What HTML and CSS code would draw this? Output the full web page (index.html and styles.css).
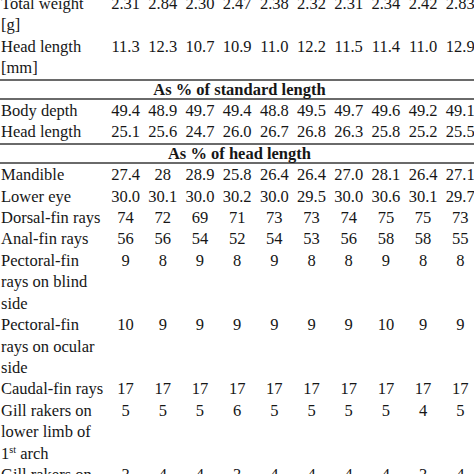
FILE: index.html
```html
<!DOCTYPE html>
<html>
<head>
<meta charset="utf-8">
<link rel="stylesheet" href="styles.css">
</head>
<body>
<table class="data">
<tbody>
<tr><td class="lbl">Total weight<br>[g]</td><td>2.31</td><td>2.84</td><td>2.30</td><td>2.47</td><td>2.38</td><td>2.32</td><td>2.31</td><td>2.34</td><td>2.42</td><td>2.83</td></tr>
<tr><td class="lbl">Head length<br>[mm]</td><td>11.3</td><td>12.3</td><td>10.7</td><td>10.9</td><td>11.0</td><td>12.2</td><td>11.5</td><td>11.4</td><td>11.0</td><td>12.9</td></tr>
<tr class="section"><td colspan="11">As % of standard length</td></tr>
<tr><td class="lbl">Body depth</td><td>49.4</td><td>48.9</td><td>49.7</td><td>49.4</td><td>48.8</td><td>49.5</td><td>49.7</td><td>49.6</td><td>49.2</td><td>49.1</td></tr>
<tr><td class="lbl">Head length</td><td>25.1</td><td>25.6</td><td>24.7</td><td>26.0</td><td>26.7</td><td>26.8</td><td>26.3</td><td>25.8</td><td>25.2</td><td>25.5</td></tr>
<tr class="section"><td colspan="11">As % of head length</td></tr>
<tr><td class="lbl">Mandible</td><td>27.4</td><td>28</td><td>28.9</td><td>25.8</td><td>26.4</td><td>26.4</td><td>27.0</td><td>28.1</td><td>26.4</td><td>27.1</td></tr>
<tr><td class="lbl">Lower eye</td><td>30.0</td><td>30.1</td><td>30.0</td><td>30.2</td><td>30.0</td><td>29.5</td><td>30.0</td><td>30.6</td><td>30.1</td><td>29.7</td></tr>
<tr><td class="lbl">Dorsal-fin rays</td><td>74</td><td>72</td><td>69</td><td>71</td><td>73</td><td>73</td><td>74</td><td>75</td><td>75</td><td>73</td></tr>
<tr><td class="lbl">Anal-fin rays</td><td>56</td><td>56</td><td>54</td><td>52</td><td>54</td><td>53</td><td>56</td><td>58</td><td>58</td><td>55</td></tr>
<tr><td class="lbl">Pectoral-fin<br>rays on blind<br>side</td><td>9</td><td>8</td><td>9</td><td>8</td><td>9</td><td>8</td><td>8</td><td>9</td><td>8</td><td>8</td></tr>
<tr><td class="lbl">Pectoral-fin<br>rays on ocular<br>side</td><td>10</td><td>9</td><td>9</td><td>9</td><td>9</td><td>9</td><td>9</td><td>10</td><td>9</td><td>9</td></tr>
<tr><td class="lbl">Caudal-fin rays</td><td>17</td><td>17</td><td>17</td><td>17</td><td>17</td><td>17</td><td>17</td><td>17</td><td>17</td><td>17</td></tr>
<tr><td class="lbl">Gill rakers on<br>lower limb of<br>1<sup>st</sup> arch</td><td>5</td><td>5</td><td>5</td><td>6</td><td>5</td><td>5</td><td>5</td><td>5</td><td>4</td><td>5</td></tr>
<tr><td class="lbl">Gill rakers on<br>upper limb of<br>1<sup>st</sup> arch</td><td>3</td><td>4</td><td>4</td><td>3</td><td>4</td><td>4</td><td>4</td><td>4</td><td>3</td><td>4</td></tr>
</tbody>
</table>
</body>
</html>
```

FILE: styles.css
```css
html, body {
  margin: 0;
  padding: 0;
  background: #ffffff;
  overflow: hidden;
}
body {
  width: 474px;
  height: 474px;
  font-family: "Liberation Serif", serif;
}
.data {
  border-collapse: collapse;
  table-layout: fixed;
  width: 478px;
  margin-top: -7px;
  font-family: "Liberation Serif", "Tinos", "DejaVu Serif", serif;
  font-size: 16.5px;
  line-height: 21.4px;
  color: #161616;
}
.data td {
  font-family: "Liberation Serif", "Tinos", "DejaVu Serif", serif;
  padding: 0;
  text-align: center;
  vertical-align: top;
  width: 37.2px;
  white-space: nowrap;
}
.data td.lbl {
  width: 106px;
  text-align: left;
  padding-left: 1px;
}
.data sup {
  font-size: 0.62em;
  line-height: 0;
  vertical-align: 0.55em;
}
.data .section td {
  font-weight: bold;
  line-height: 17.4px;
  border-top: 2px solid #6a6a6a;
  border-bottom: 2px solid #6a6a6a;
  text-align: center;
}
```
